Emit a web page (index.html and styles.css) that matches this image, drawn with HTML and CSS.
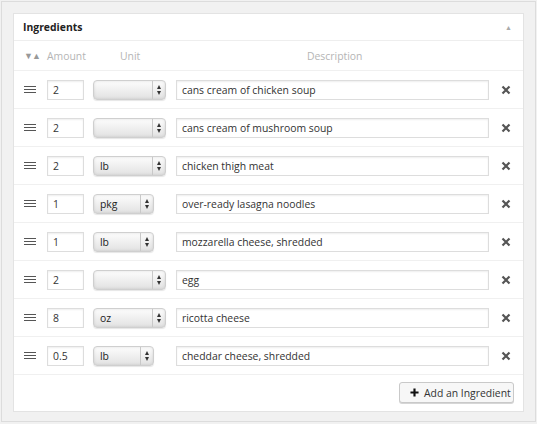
FILE: index.html
```html
<!DOCTYPE html>
<html>
<head>
<meta charset="utf-8">
<link rel="stylesheet" href="styles.css">
</head>
<body>
<div class="frame">
  <div class="panel">
    <div class="panel-head">
      <span class="title">Ingredients</span>
      <span class="toggle">&#9650;</span>
    </div>
    <div class="row cols">
      <div class="c-handle"><span class="sorter">&#9660;&#9650;</span></div>
      <div class="c-amount lbl">Amount</div>
      <div class="c-unit lbl">Unit</div>
      <div class="c-desc lbl dlbl">Description</div>
      <div></div>
    </div>

    <div class="row item">
      <div class="c-handle"><span class="burger"></span></div>
      <div class="c-amount"><span class="inp amt">2</span></div>
      <div class="c-unit"><span class="sel wide"><span class="sv"></span><span class="arr"></span></span></div>
      <div class="c-desc"><span class="inp desc">cans cream of chicken soup</span></div>
      <div class="c-del"><svg class="x" viewBox="0 0 10 10"><path d="M1.5 1.5L8.5 8.5M8.5 1.5L1.5 8.5"/></svg></div>
    </div>
    <div class="row item">
      <div class="c-handle"><span class="burger"></span></div>
      <div class="c-amount"><span class="inp amt">2</span></div>
      <div class="c-unit"><span class="sel wide"><span class="sv"></span><span class="arr"></span></span></div>
      <div class="c-desc"><span class="inp desc">cans cream of mushroom soup</span></div>
      <div class="c-del"><svg class="x" viewBox="0 0 10 10"><path d="M1.5 1.5L8.5 8.5M8.5 1.5L1.5 8.5"/></svg></div>
    </div>
    <div class="row item">
      <div class="c-handle"><span class="burger"></span></div>
      <div class="c-amount"><span class="inp amt">2</span></div>
      <div class="c-unit"><span class="sel wide"><span class="sv">lb</span><span class="arr"></span></span></div>
      <div class="c-desc"><span class="inp desc">chicken thigh meat</span></div>
      <div class="c-del"><svg class="x" viewBox="0 0 10 10"><path d="M1.5 1.5L8.5 8.5M8.5 1.5L1.5 8.5"/></svg></div>
    </div>
    <div class="row item">
      <div class="c-handle"><span class="burger"></span></div>
      <div class="c-amount"><span class="inp amt">1</span></div>
      <div class="c-unit"><span class="sel narrow"><span class="sv">pkg</span><span class="arr"></span></span></div>
      <div class="c-desc"><span class="inp desc">over-ready lasagna noodles</span></div>
      <div class="c-del"><svg class="x" viewBox="0 0 10 10"><path d="M1.5 1.5L8.5 8.5M8.5 1.5L1.5 8.5"/></svg></div>
    </div>
    <div class="row item">
      <div class="c-handle"><span class="burger"></span></div>
      <div class="c-amount"><span class="inp amt">1</span></div>
      <div class="c-unit"><span class="sel narrow"><span class="sv">lb</span><span class="arr"></span></span></div>
      <div class="c-desc"><span class="inp desc">mozzarella cheese, shredded</span></div>
      <div class="c-del"><svg class="x" viewBox="0 0 10 10"><path d="M1.5 1.5L8.5 8.5M8.5 1.5L1.5 8.5"/></svg></div>
    </div>
    <div class="row item">
      <div class="c-handle"><span class="burger"></span></div>
      <div class="c-amount"><span class="inp amt">2</span></div>
      <div class="c-unit"><span class="sel wide"><span class="sv"></span><span class="arr"></span></span></div>
      <div class="c-desc"><span class="inp desc">egg</span></div>
      <div class="c-del"><svg class="x" viewBox="0 0 10 10"><path d="M1.5 1.5L8.5 8.5M8.5 1.5L1.5 8.5"/></svg></div>
    </div>
    <div class="row item">
      <div class="c-handle"><span class="burger"></span></div>
      <div class="c-amount"><span class="inp amt">8</span></div>
      <div class="c-unit"><span class="sel wide"><span class="sv">oz</span><span class="arr"></span></span></div>
      <div class="c-desc"><span class="inp desc">ricotta cheese</span></div>
      <div class="c-del"><svg class="x" viewBox="0 0 10 10"><path d="M1.5 1.5L8.5 8.5M8.5 1.5L1.5 8.5"/></svg></div>
    </div>
    <div class="row item">
      <div class="c-handle"><span class="burger"></span></div>
      <div class="c-amount"><span class="inp amt">0.5</span></div>
      <div class="c-unit"><span class="sel narrow"><span class="sv">lb</span><span class="arr"></span></span></div>
      <div class="c-desc"><span class="inp desc">cheddar cheese, shredded</span></div>
      <div class="c-del"><svg class="x" viewBox="0 0 10 10"><path d="M1.5 1.5L8.5 8.5M8.5 1.5L1.5 8.5"/></svg></div>
    </div>

    <div class="foot">
      <span class="btn"><svg class="plus" viewBox="0 0 10 10"><path d="M5 0.5V9.5M0.5 5H9.5"/></svg>Add an Ingredient</span>
    </div>
  </div>
</div>
</body>
</html>
```

FILE: styles.css
```css
* { box-sizing: border-box; }
html, body { margin: 0; padding: 0; }
body {
  background: #f1f1f1;
  font-family: "Open Sans", "Liberation Sans", sans-serif;
  font-size: 10.4px;
  color: #333;
  width: 537px;
  height: 424px;
  overflow: hidden;
}
.frame {
  margin: 1px 0 0 1px;
  width: 535px;
  height: 421px;
  border: 1px solid #dcdcdc;
  padding: 11px 11px 0 11px;
}
.panel {
  width: 511px;
  height: 399px;
  background: #fff;
  border: 1px solid #e3e3e3;
}
.panel-head {
  height: 27px;
  border-bottom: 1px solid #eeeeee;
  display: flex;
  align-items: center;
  justify-content: space-between;
  padding: 0 11px 0 9px;
}
.title { font-weight: 700; font-size: 10.4px; color: #222; }
.toggle { font-size: 7px; color: #aaa; }

.row {
  display: grid;
  grid-template-columns: 33px 46px 83px 1fr 33px;
  align-items: center;
  border-bottom: 1px solid #f0f0f0;
}
.cols { height: 30px; }
.item { height: 38px; }
.lbl { color: #b5b5b5; font-size: 10.4px; }
.dlbl { padding-left: 131px; }
.c-unit.lbl { padding-left: 27px; }
.c-handle { padding-left: 10px; display: flex; align-items: center; }
.sorter { font-size: 9px; color: #999; letter-spacing: -1px; }
.burger {
  display: block;
  width: 12px;
  height: 7px;
  border-top: 1px solid #555;
  border-bottom: 1px solid #555;
  position: relative;
}
.burger::after {
  content: "";
  position: absolute;
  left: 0; right: 0; top: 2px;
  border-top: 1px solid #555;
}
.inp {
  display: flex;
  align-items: center;
  height: 20px;
  border: 1px solid #dddddd;
  box-shadow: inset 0 1px 2px rgba(0,0,0,0.07);
  background: #fff;
  padding: 0 5px;
  color: #333;
  white-space: nowrap;
}
.amt { width: 37px; }
.desc { width: 313px; }
.sel {
  display: flex;
  align-items: center;
  height: 20px;
  border: 1px solid #cfcfcf;
  border-radius: 4px;
  background: linear-gradient(#fdfdfd, #eeeeee 55%, #e2e2e2);
  box-shadow: 0 1px 1px rgba(0,0,0,0.1), inset 0 0 3px rgba(0,0,0,0.12);
  color: #222;
}
.wide { width: 73px; }
.narrow { width: 61px; }
.sv { flex: 1; padding-left: 6px; }
.arr {
  width: 13px;
  height: 100%;
  border-left: 1px solid #c8c8c8;
  position: relative;
}
.arr::before, .arr::after {
  content: "";
  position: absolute;
  left: 4px;
  border-left: 2.5px solid transparent;
  border-right: 2.5px solid transparent;
}
.arr::before { top: 4px; border-bottom: 4px solid #333; }
.arr::after { top: 10px; border-top: 4px solid #333; }
.c-del { display: flex; justify-content: flex-start; padding-left: 11px; }
.x { width: 10px; height: 10px; }
.x path { stroke: #555; stroke-width: 2.2; fill: none; }
.foot {
  height: 36px;
  display: flex;
  justify-content: flex-end;
  align-items: flex-start;
  padding: 7px 9px 0 0;
}
.btn {
  display: flex;
  align-items: center;
  white-space: nowrap;
  height: 21px;
  width: 115px;
  border: 1px solid #c9c9c9;
  border-radius: 3px;
  background: #f7f7f7;
  box-shadow: 0 1px 0 #d6d6d6;
  padding-left: 10px;
  color: #333;
}
.plus { width: 9px; height: 9px; margin-right: 5px; flex: none; }
.plus path { stroke: #111; stroke-width: 2.4; fill: none; }
```
